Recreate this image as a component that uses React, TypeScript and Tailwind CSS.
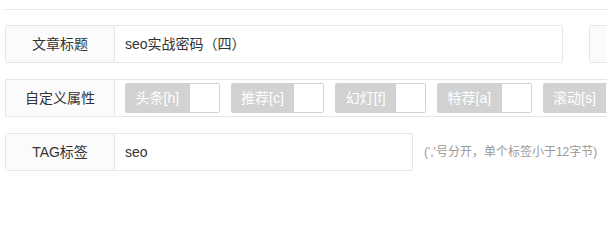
import React from "react";

const flags = ["头条[h]", "推荐[c]", "幻灯[f]", "特荐[a]", "滚动[s]"];

function Label({ children }: { children: React.ReactNode }) {
  return (
    <div className="flex h-[38px] w-[110px] shrink-0 items-center justify-center rounded-l-[2px] border border-[#e6e6e6] bg-[#fbfbfb] text-[14px] text-[#333]">
      {children}
    </div>
  );
}

function Flag({ text }: { text: string }) {
  return (
    <div className="flex h-[30px] shrink-0">
      <span className="flex h-full items-center rounded-l-[2px] bg-[#d2d2d2] px-[10.5px] text-[14px] text-white">{text}</span>
      <i className="block h-full w-[30px] rounded-r-[2px] border border-l-0 border-[#d2d2d2] bg-white" />
    </div>
  );
}

export default function App() {
  return (
    <div
      className="h-[213px] w-[607px] overflow-hidden bg-white"
      style={{ fontFamily: '"Liberation Sans", "Noto Sans CJK SC", sans-serif' }}
    >
      <div className="w-[1000px] pl-[5px] pt-[9px]">
        <div className="h-px w-[602px] bg-[#e6e6e6]" />

        <div className="mt-[15px] flex">
          <Label>文章标题</Label>
          <div className="flex h-[38px] w-[448px] items-center rounded-r-[2px] border border-l-0 border-[#e6e6e6] bg-white pl-[10px] text-[14px] text-[#333]">
            seo实战密码（四）
          </div>
          <div className="ml-[26px] h-[38px] w-[110px] rounded-l-[2px] border border-[#e6e6e6] bg-[#fbfbfb]" />
        </div>

        <div className="mt-[16px] flex">
          <Label>自定义属性</Label>
          <div className="flex h-[38px] flex-1 items-center gap-[11px] border border-l-0 border-[#e6e6e6] pl-[10px]">
            {flags.map((f) => (
              <Flag key={f} text={f} />
            ))}
          </div>
        </div>

        <div className="mt-[16px] flex items-center">
          <Label>TAG标签</Label>
          <div className="flex h-[38px] w-[298px] items-center rounded-r-[2px] border border-l-0 border-[#e6e6e6] bg-white pl-[10px] text-[14px] text-[#333]">
            seo
          </div>
          <span className="ml-[11px] text-[12px] text-[#999]">(','号分开，单个标签小于12字节)</span>
        </div>
      </div>
    </div>
  );
}
